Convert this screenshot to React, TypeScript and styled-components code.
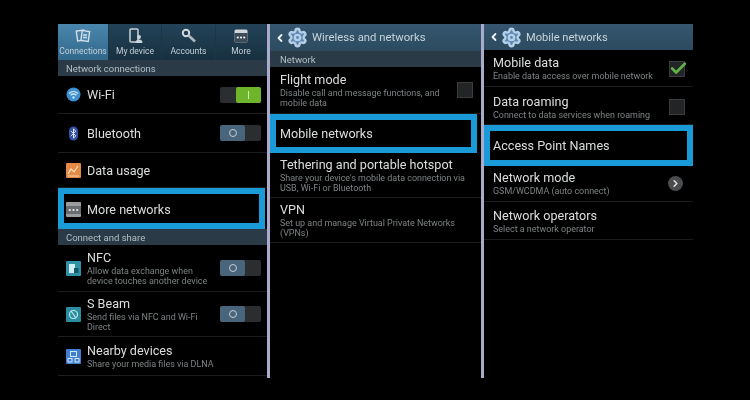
import { ReactNode } from 'react';
import styled, { createGlobalStyle } from 'styled-components';
import { Check, ChevronLeft, ChevronRight, Settings } from 'lucide-react';

const GlobalStyle = createGlobalStyle`
  html, body {
    margin: 0;
    background: #000;
  }
  body {
    font-family: "Roboto", "Liberation Sans", sans-serif;
  }
`;

const Page = styled.div`
  width: 750px;
  height: 400px;
  padding: 24px 58px 22px;
  box-sizing: border-box;
  background: #000;
  display: flex;
  overflow: hidden;
  filter: blur(0.6px);
`;

const Divider = styled.div`
  width: 3px;
  height: 354px;
  flex: none;
  background: #aaaacb;
`;

const Tabs = styled.div`
  height: 36px;
  display: grid;
  grid-template-columns: 51px 53px 54px 1fr;
  background: linear-gradient(#234258, #17303f);
`;

const Tab = styled.div<{ $active?: boolean }>`
  display: flex;
  flex-direction: column;
  align-items: center;
  justify-content: flex-start;
  padding-top: 4px;
  gap: 2px;
  background: ${(p) => (p.$active ? 'linear-gradient(#4a86ac, #31688b)' : 'transparent')};
  border-right: 1px solid #1d3546;
  font-size: 8.5px;
  color: #c3ced6;
  white-space: nowrap;
  overflow: hidden;
  svg { width: 16px; height: 16px; flex: none; }
`;

const ActionBar = styled.header<{ $height: number; $size: number }>`
  height: ${(p) => p.$height}px;
  flex: none;
  display: flex;
  align-items: center;
  padding-left: 4px;
  gap: 1px;
  background: linear-gradient(#35566e, #2c4b60);
  color: #c8d3db;
  font-size: ${(p) => p.$size}px;
`;

const BackIcon = styled(ChevronLeft)`
  width: 12px;
  height: 16px;
  stroke-width: 3.6;
  color: #f0f3f5;
  flex: none;
`;

const GearIcon = styled(Settings)`
  width: 21px;
  height: 21px;
  margin-right: 3px;
  stroke-width: 2.8;
  color: #b5cfe6;
  fill: #5a86b3;
  flex: none;
`;

const SectionHeader = styled.div<{ $indent: number }>`
  height: 16px;
  flex: none;
  display: flex;
  align-items: center;
  padding-left: ${(p) => p.$indent}px;
  background: #2a3a46;
  color: #b4bfc6;
  font-size: 9.5px;
`;

const Row = styled.div<{ $height: number; $drop?: number }>`
  height: ${(p) => p.$height}px;
  flex: none;
  box-sizing: border-box;
  display: flex;
  align-items: center;
  padding: ${(p) => p.$drop ?? 0}px 6px 0 8px;
  gap: 6px;
  border-bottom: 1px solid #1a1d20;
`;

const Highlight = styled.div<{ $height: number; $inset: number; $drop?: number; $side?: number }>`
  height: ${(p) => p.$height}px;
  flex: none;
  box-sizing: border-box;
  display: flex;
  align-items: center;
  gap: 6px;
  padding: ${(p) => p.$drop ?? 0}px 0 0 ${(p) => p.$inset}px;
  margin: 0 ${(p) => p.$side ?? 0}px 0 0;
  border: 6px solid #1a9bd7;
  background: #000;
`;

const Panel = styled.section<{ $width: number; $textInset: number }>`
  width: ${(p) => p.$width}px;
  flex: none;
  display: flex;
  flex-direction: column;
  height: 354px;
  ${Row} {
    padding-left: ${(p) => p.$textInset}px;
  }
`;

const RowText = styled.div`
  flex: 1;
  min-width: 0;
  display: flex;
  flex-direction: column;
`;

const Title = styled.div`
  font-size: 12.6px;
  line-height: 15px;
  color: #dcdede;
  white-space: nowrap;
`;

const Sub = styled.div`
  font-size: 8.95px;
  line-height: 10.5px;
  color: #7f8385;
  margin-top: 1px;
`;

const IconBox = styled.div`
  width: 15px;
  height: 15px;
  flex: none;
  svg { width: 15px; height: 15px; display: block; }
`;

const Switch = styled.div<{ $on?: boolean }>`
  width: 41px;
  height: 16px;
  flex: none;
  border-radius: 2px;
  background: #2b2e30;
  display: flex;
  justify-content: ${(p) => (p.$on ? 'flex-end' : 'flex-start')};
`;

const Thumb = styled.div<{ $on?: boolean }>`
  width: 25px;
  height: 16px;
  border-radius: 2px;
  background: ${(p) => (p.$on ? '#6fb52c' : '#49657c')};
  display: flex;
  align-items: center;
  justify-content: center;
`;

const ThumbOff = styled.div`
  width: 8px;
  height: 8px;
  box-sizing: border-box;
  border: 1.5px solid #c4ced6;
  border-radius: 50%;
`;

const ThumbOn = styled.div`
  width: 1.5px;
  height: 8px;
  background: #d7eeb9;
`;

const CheckBox = styled.div`
  width: 16px;
  height: 16px;
  flex: none;
  margin-right: 2px;
  box-sizing: border-box;
  border: 1px solid #3a3c3e;
  background: #222426;
  position: relative;
`;

const CheckMark = styled(Check)`
  position: absolute;
  left: -1px;
  top: -3px;
  width: 19px;
  height: 19px;
  stroke-width: 3.4;
  color: #5fb24a;
`;

const MoreButton = styled.div`
  width: 15px;
  height: 15px;
  flex: none;
  margin-right: 4px;
  border-radius: 50%;
  background: #4a4c4e;
  display: flex;
  align-items: center;
  justify-content: center;
  color: #dfe1e2;
  svg { width: 11px; height: 11px; stroke-width: 3.4; }
`;

const ConnectionsIcon = () => (
  <svg viewBox="0 0 16 16" fill="none" stroke="#d3dee6" strokeWidth="1.4">
    <rect x="2" y="2.5" width="7.5" height="10" transform="rotate(-8 6 8)" />
    <rect x="6.5" y="3" width="7.5" height="10" transform="rotate(8 10 8)" fill="#4a86ac" />
    <path d="M8 7h4M8 9.5h4" />
  </svg>
);

const DeviceIcon = () => (
  <svg viewBox="0 0 16 16" fill="none">
    <rect x="3" y="1" width="8" height="13" rx="1" stroke="#c9d3da" strokeWidth="1.5" />
    <circle cx="12" cy="9" r="2" fill="#c9d3da" />
    <path d="M8.5 15c0-2.5 1.5-3.5 3.5-3.5s3.500 1 3.500 3.500z" fill="#c9d3da" />
  </svg>
);

const KeyIcon = () => (
  <svg viewBox="0 0 16 16" fill="none">
    <circle cx="5" cy="5" r="3.2" stroke="#d0d8de" strokeWidth="2" />
    <path d="M7.500 7.500l6.500 6" stroke="#aeb9c0" strokeWidth="2.600" />
  </svg>
);

const MoreTabIcon = () => (
  <svg viewBox="0 0 16 16">
    <rect x="1.500" y="1.500" width="13" height="13" rx="1.500" fill="#cfd6db" />
    <rect x="1.500" y="5" width="13" height="9.500" fill="#3b4c58" />
    <circle cx="4.800" cy="9.500" r="1.100" fill="#eef1f3" />
    <circle cx="8" cy="9.500" r="1.100" fill="#eef1f3" />
    <circle cx="11.200" cy="9.500" r="1.100" fill="#eef1f3" />
  </svg>
);

const WifiIcon = () => (
  <svg viewBox="0 0 15 15" fill="none">
    <circle cx="7.500" cy="7.500" r="7" fill="#3f8fd0" />
    <path d="M3 6.500c2.600-2.400 6.400-2.400 9 0M4.600 8.300c1.700-1.500 4.100-1.500 5.800 0" stroke="#cfe8f7" strokeWidth="1.300" />
    <circle cx="7.500" cy="10.500" r="1.200" fill="#cfe8f7" />
  </svg>
);

const BluetoothIcon = () => (
  <svg viewBox="0 0 15 15" fill="none">
    <rect x="3" y="0.500" width="9" height="14" rx="4.500" fill="#3350a8" />
    <path d="M4.800 5l5 4.800-2.300 2.400V2.800l2.300 2.400-5 4.800" stroke="#e4e9f6" strokeWidth="1" />
  </svg>
);

const DataUsageIcon = () => (
  <svg viewBox="0 0 15 15" fill="none">
    <rect width="15" height="15" rx="1" fill="#e58a45" />
    <path d="M2 11l3-5 3 3 4-6" stroke="#fbe3cc" strokeWidth="1.100" />
    <path d="M2 13h11" stroke="#fbe3cc" strokeWidth="0.800" />
  </svg>
);

const MoreNetworksIcon = () => (
  <svg viewBox="0 0 15 15">
    <rect width="15" height="15" rx="1" fill="#9a9c9d" />
    <rect y="4" width="15" height="8" fill="#6a6d6f" />
    <circle cx="3.800" cy="8" r="1.100" fill="#f0f0f0" />
    <circle cx="7.500" cy="8" r="1.100" fill="#f0f0f0" />
    <circle cx="11.200" cy="8" r="1.100" fill="#f0f0f0" />
  </svg>
);

const NfcIcon = () => (
  <svg viewBox="0 0 15 15" fill="none">
    <rect width="15" height="15" rx="1" fill="#2f93a8" />
    <rect x="3" y="3" width="6" height="9" fill="#d3eef3" />
    <rect x="8" y="7" width="4.500" height="5" fill="#14566a" />
  </svg>
);

const BeamIcon = () => (
  <svg viewBox="0 0 15 15" fill="none">
    <rect width="15" height="15" rx="1" fill="#2a8ea0" />
    <circle cx="7.500" cy="7.500" r="4" stroke="#bfe6ee" strokeWidth="1.200" />
    <path d="M5 4l5 7" stroke="#bfe6ee" strokeWidth="1.200" />
  </svg>
);

const NearbyIcon = () => (
  <svg viewBox="0 0 15 15" fill="none">
    <rect width="15" height="15" rx="1" fill="#3f7fd0" />
    <rect x="4.500" y="2.500" width="6" height="5" stroke="#d9e8f8" />
    <rect x="2" y="9.500" width="4" height="3.500" stroke="#d9e8f8" />
    <rect x="9" y="9.500" width="4" height="3.500" stroke="#d9e8f8" />
  </svg>
);

const tabs = [
  { label: 'Connections', icon: <ConnectionsIcon />, active: true },
  { label: 'My device', icon: <DeviceIcon /> },
  { label: 'Accounts', icon: <KeyIcon /> },
  { label: 'More', icon: <MoreTabIcon /> },
];

const OffSwitch = () => (
  <Switch>
    <Thumb>
      <ThumbOff />
    </Thumb>
  </Switch>
);

type SettingProps = {
  height: number;
  drop?: number;
  title: string;
  sub?: string;
  icon?: ReactNode;
  trailing?: ReactNode;
};

const Setting = ({ height, drop, title, sub, icon, trailing }: SettingProps) => (
  <Row $height={height} $drop={drop}>
    {icon && <IconBox>{icon}</IconBox>}
    <RowText>
      <Title>{title}</Title>
      {sub && <Sub>{sub}</Sub>}
    </RowText>
    {trailing}
  </Row>
);

const App = () => (
  <Page>
    <GlobalStyle />
    <Panel $width={209} $textInset={8}>
      <Tabs>
        {tabs.map((t) => (
          <Tab key={t.label} $active={t.active}>
            {t.icon}
            {t.label}
          </Tab>
        ))}
      </Tabs>
      <SectionHeader $indent={8}>Network connections</SectionHeader>
      <Setting height={38} title="Wi-Fi" icon={<WifiIcon />} trailing={
        <Switch $on>
          <Thumb $on>
            <ThumbOn />
          </Thumb>
        </Switch>
      } />
      <Setting height={39} title="Bluetooth" icon={<BluetoothIcon />} trailing={<OffSwitch />} />
      <Setting height={35} title="Data usage" icon={<DataUsageIcon />} />
      <Highlight $height={41} $inset={2} $drop={2} $side={2}>
        <IconBox><MoreNetworksIcon /></IconBox>
        <Title>More networks</Title>
      </Highlight>
      <SectionHeader $indent={8}>Connect and share</SectionHeader>
      <Setting height={47} title="NFC" sub="Allow data exchange when device touches another device" icon={<NfcIcon />} trailing={<OffSwitch />} />
      <Setting height={45} title="S Beam" sub="Send files via NFC and Wi-Fi Direct" icon={<BeamIcon />} trailing={<OffSwitch />} />
      <Setting height={39} drop={1} title="Nearby devices" sub="Share your media files via DLNA" icon={<NearbyIcon />} />
    </Panel>
    <Divider />
    <Panel $width={211} $textInset={10}>
      <ActionBar $height={27} $size={11.3}>
        <BackIcon />
        <GearIcon />
        Wireless and networks
      </ActionBar>
      <SectionHeader $indent={10}>Network</SectionHeader>
      <Setting height={47} title="Flight mode" sub="Disable call and message functions, and mobile data" trailing={<CheckBox />} />
      <Highlight $height={39} $inset={4} $side={4}>
        <Title>Mobile networks</Title>
      </Highlight>
      <Setting height={45} title="Tethering and portable hotspot" sub="Share your device's mobile data connection via USB, Wi-Fi or Bluetooth" />
      <Setting height={45} title="VPN" sub="Set up and manage Virtual Private Networks (VPNs)" />
    </Panel>
    <Divider />
    <Panel $width={209} $textInset={9}>
      <ActionBar $height={26} $size={11.1}>
        <BackIcon />
        <GearIcon />
        Mobile networks
      </ActionBar>
      <Setting height={37} drop={1} title="Mobile data" sub="Enable data access over mobile network" trailing={
        <CheckBox>
          <CheckMark />
        </CheckBox>
      } />
      <Setting height={38} drop={3} title="Data roaming" sub="Connect to data services when roaming" trailing={<CheckBox />} />
      <Highlight $height={41} $inset={3}>
        <Title>Access Point Names</Title>
      </Highlight>
      <Setting height={36} title="Network mode" sub="GSM/WCDMA (auto connect)" trailing={
        <MoreButton>
          <ChevronRight />
        </MoreButton>
      } />
      <Setting height={38} drop={1} title="Network operators" sub="Select a network operator" />
    </Panel>
  </Page>
);

export default App;
